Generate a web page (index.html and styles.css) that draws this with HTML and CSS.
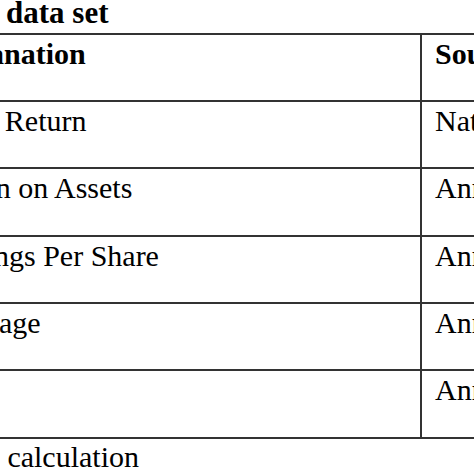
FILE: index.html
```html
<!DOCTYPE html>
<html>
<head>
<meta charset="utf-8">
<link rel="stylesheet" href="styles.css">
</head>
<body>
<div class="page">
  <div class="title"><span>Table 1. Variables of the data set</span></div>
  <div class="table">
    <div class="row head">
      <div class="cell left">Explanation</div>
      <div class="cell right">Source</div>
    </div>
    <div class="row">
      <div class="cell left">Stock Return</div>
      <div class="cell right">National Stock Exchange</div>
    </div>
    <div class="row">
      <div class="cell left">Return on Assets</div>
      <div class="cell right">Annual Report</div>
    </div>
    <div class="row">
      <div class="cell left">Earnings Per Share</div>
      <div class="cell right">Annual Report</div>
    </div>
    <div class="row">
      <div class="cell left">Leverage</div>
      <div class="cell right">Annual Report</div>
    </div>
    <div class="row">
      <div class="cell left">Size</div>
      <div class="cell right">Annual Report</div>
    </div>
  </div>
  <div class="note"><span>Source: Author's calculation</span></div>
</div>
</body>
</html>
```

FILE: styles.css
```css
html, body {
  margin: 0;
  padding: 0;
  background: #fff;
}
body {
  width: 474px;
  height: 474px;
  overflow: hidden;
  font-family: "Liberation Serif", "Times New Roman", serif;
  font-size: 30px;
  line-height: 33px;
  color: #000;
}
.page {
  width: 474px;
}
.title {
  display: flex;
  justify-content: flex-end;
  width: 108.5px;
  white-space: nowrap;
  font-weight: bold;
  font-size: 31px;
  margin-top: -4px;
  margin-bottom: 4px;
  height: 33px;
}
.table {
  margin-left: -84px;
  width: 900px;
  border-top: 2px solid #333;
}
.row {
  display: grid;
  grid-template-columns: 506px 1fr;
  height: 67.33px;
  box-sizing: border-box;
  border-bottom: 2px solid #333;
}
.row.head {
  height: 67px;
  font-weight: bold;
}
.cell {
  padding: 2px 13px;
  white-space: nowrap;
}
.cell.left {
  border-right: 2px solid #333;
}
.note {
  display: flex;
  justify-content: flex-end;
  width: 139px;
  white-space: nowrap;
  margin-top: 1px;
}
```
